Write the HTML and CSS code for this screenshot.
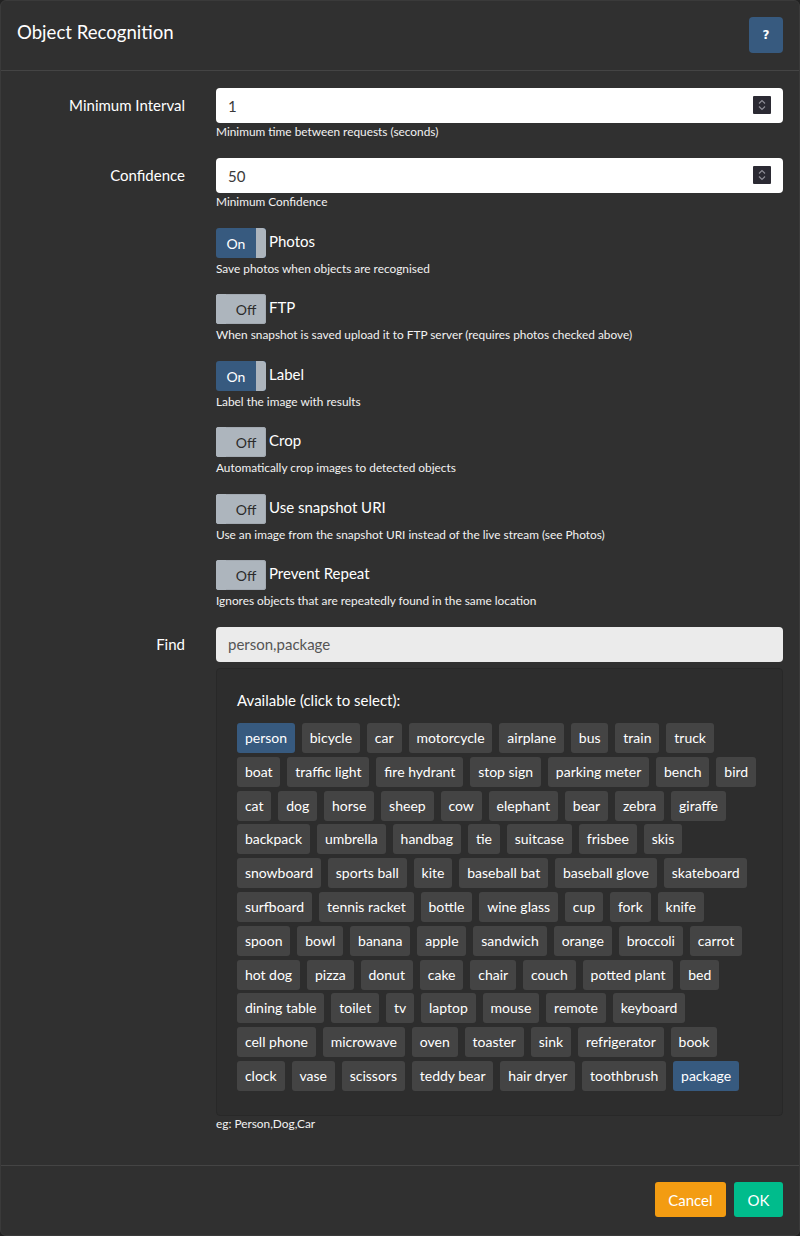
FILE: index.html
```html
<!DOCTYPE html>
<html lang="en">
<head>
<meta charset="utf-8">
<title>Object Recognition</title>
<link rel="stylesheet" href="styles.css">
</head>
<body>
<div class="modal">
  <div class="modal-header">
    <h4 class="modal-title">Object Recognition</h4>
    <button class="btn-help" type="button">?</button>
  </div>
  <div class="modal-body">
    <div class="group">
      <label class="control-label">Minimum Interval</label>
      <div class="control">
        <div class="form-control number"><span class="value">1</span><svg class="spin" width="18" height="18" viewBox="0 0 18 18"><rect width="18" height="18" rx="1" fill="#2b2a33"/><path d="M6 7.5 L9 4.5 L12 7.5" fill="none" stroke="#8e8d96" stroke-width="1.2"/><path d="M6 10.5 L9 13.5 L12 10.5" fill="none" stroke="#8e8d96" stroke-width="1.2"/></svg></div>
        <p class="help">Minimum time between requests (seconds)</p>
      </div>
    </div>
    <div class="group">
      <label class="control-label">Confidence</label>
      <div class="control">
        <div class="form-control number"><span class="value">50</span><svg class="spin" width="18" height="18" viewBox="0 0 18 18"><rect width="18" height="18" rx="1" fill="#2b2a33"/><path d="M6 7.5 L9 4.5 L12 7.5" fill="none" stroke="#8e8d96" stroke-width="1.2"/><path d="M6 10.5 L9 13.5 L12 10.5" fill="none" stroke="#8e8d96" stroke-width="1.2"/></svg></div>
        <p class="help">Minimum Confidence</p>
      </div>
    </div>

    <div class="group toggle-group">
      <span></span>
      <div class="control">
        <div class="toggle-line"><span class="toggle on"><span class="toggle-text">On</span><span class="handle"></span></span><span class="toggle-label">Photos</span></div>
        <p class="help help-toggle">Save photos when objects are recognised</p>
      </div>
    </div>
    <div class="group toggle-group">
      <span></span>
      <div class="control">
        <div class="toggle-line"><span class="toggle off"><span class="handle"></span><span class="toggle-text">Off</span></span><span class="toggle-label">FTP</span></div>
        <p class="help help-toggle">When snapshot is saved upload it to FTP server (requires photos checked above)</p>
      </div>
    </div>
    <div class="group toggle-group">
      <span></span>
      <div class="control">
        <div class="toggle-line"><span class="toggle on"><span class="toggle-text">On</span><span class="handle"></span></span><span class="toggle-label">Label</span></div>
        <p class="help help-toggle">Label the image with results</p>
      </div>
    </div>
    <div class="group toggle-group">
      <span></span>
      <div class="control">
        <div class="toggle-line"><span class="toggle off"><span class="handle"></span><span class="toggle-text">Off</span></span><span class="toggle-label">Crop</span></div>
        <p class="help help-toggle">Automatically crop images to detected objects</p>
      </div>
    </div>
    <div class="group toggle-group">
      <span></span>
      <div class="control">
        <div class="toggle-line"><span class="toggle off"><span class="handle"></span><span class="toggle-text">Off</span></span><span class="toggle-label">Use snapshot URI</span></div>
        <p class="help help-toggle">Use an image from the snapshot URI instead of the live stream (see Photos)</p>
      </div>
    </div>
    <div class="group toggle-group last-toggle">
      <span></span>
      <div class="control">
        <div class="toggle-line"><span class="toggle off"><span class="handle"></span><span class="toggle-text">Off</span></span><span class="toggle-label">Prevent Repeat</span></div>
        <p class="help help-toggle">Ignores objects that are repeatedly found in the same location</p>
      </div>
    </div>

    <div class="group find-group">
      <label class="control-label">Find</label>
      <div class="control">
        <div class="form-control readonly"><span class="value">person,package</span></div>
        <div class="well">
          <div class="well-title">Available (click to select):</div>
          <div class="tags">
            <div class="tag-row"><span class="tag sel">person</span><span class="tag">bicycle</span><span class="tag">car</span><span class="tag">motorcycle</span><span class="tag">airplane</span><span class="tag">bus</span><span class="tag">train</span><span class="tag">truck</span></div>
            <div class="tag-row"><span class="tag">boat</span><span class="tag">traffic light</span><span class="tag">fire hydrant</span><span class="tag">stop sign</span><span class="tag">parking meter</span><span class="tag">bench</span><span class="tag">bird</span></div>
            <div class="tag-row"><span class="tag">cat</span><span class="tag">dog</span><span class="tag">horse</span><span class="tag">sheep</span><span class="tag">cow</span><span class="tag">elephant</span><span class="tag">bear</span><span class="tag">zebra</span><span class="tag">giraffe</span></div>
            <div class="tag-row"><span class="tag">backpack</span><span class="tag">umbrella</span><span class="tag">handbag</span><span class="tag">tie</span><span class="tag">suitcase</span><span class="tag">frisbee</span><span class="tag">skis</span></div>
            <div class="tag-row"><span class="tag">snowboard</span><span class="tag">sports ball</span><span class="tag">kite</span><span class="tag">baseball bat</span><span class="tag">baseball glove</span><span class="tag">skateboard</span></div>
            <div class="tag-row"><span class="tag">surfboard</span><span class="tag">tennis racket</span><span class="tag">bottle</span><span class="tag">wine glass</span><span class="tag">cup</span><span class="tag">fork</span><span class="tag">knife</span></div>
            <div class="tag-row"><span class="tag">spoon</span><span class="tag">bowl</span><span class="tag">banana</span><span class="tag">apple</span><span class="tag">sandwich</span><span class="tag">orange</span><span class="tag">broccoli</span><span class="tag">carrot</span></div>
            <div class="tag-row"><span class="tag">hot dog</span><span class="tag">pizza</span><span class="tag">donut</span><span class="tag">cake</span><span class="tag">chair</span><span class="tag">couch</span><span class="tag">potted plant</span><span class="tag">bed</span></div>
            <div class="tag-row"><span class="tag">dining table</span><span class="tag">toilet</span><span class="tag">tv</span><span class="tag">laptop</span><span class="tag">mouse</span><span class="tag">remote</span><span class="tag">keyboard</span></div>
            <div class="tag-row"><span class="tag">cell phone</span><span class="tag">microwave</span><span class="tag">oven</span><span class="tag">toaster</span><span class="tag">sink</span><span class="tag">refrigerator</span><span class="tag">book</span></div>
            <div class="tag-row"><span class="tag">clock</span><span class="tag">vase</span><span class="tag">scissors</span><span class="tag">teddy bear</span><span class="tag">hair dryer</span><span class="tag">toothbrush</span><span class="tag sel">package</span></div>
          </div>
        </div>
        <p class="help help-eg">eg: Person,Dog,Car</p>
      </div>
    </div>
  </div>
  <div class="modal-footer">
    <button class="btn btn-warning" type="button">Cancel</button>
    <button class="btn btn-success" type="button">OK</button>
  </div>
</div>
</body>
</html>
```
FILE: styles.css
```css
* { box-sizing: border-box; }
html, body { margin: 0; padding: 0; }
body {
  background: #222;
  font-family: Lato, "Open Sans", "Liberation Sans", sans-serif;
  color: #fff;
  width: 800px;
  height: 1236px;
}
.modal {
  width: 800px;
  height: 1236px;
  background: #303030;
  border: 1px solid #3a3a3a;
  border-radius: 6px;
  display: flex;
  flex-direction: column;
  overflow: hidden;
}
.modal-header {
  height: 70px;
  border-bottom: 1px solid #444;
  display: flex;
  align-items: flex-start;
  justify-content: space-between;
  padding: 16px 16px 0 16px;
}
.modal-title {
  margin: 0;
  font-size: 18.6px;
  font-weight: 400;
  line-height: 30px;
  color: #fff;
}
.btn-help {
  width: 34px;
  height: 36px;
  border: none;
  border-radius: 4px;
  background: #375a7f;
  color: #fff;
  font-family: "DejaVu Sans", sans-serif;
  font-weight: 700;
  font-size: 12px;
  padding: 0;
}
.modal-body {
  flex: 1;
  padding: 17px 16px 0 15px;
}
.group {
  display: grid;
  grid-template-columns: 169px 1fr;
  column-gap: 31px;
  margin-bottom: 18px;
}
.control-label {
  text-align: right;
  font-size: 15px;
  line-height: 35px;
  color: #fff;
}
.control { min-width: 0; }
.form-control {
  height: 35px;
  border-radius: 4px;
  background: #fff;
  display: flex;
  align-items: center;
  justify-content: space-between;
  padding: 0 12px 0 12px;
  font-size: 15px;
  color: #3a3a3a;
}
.form-control .spin { display: block; margin-top: -1px; }
.form-control.readonly {
  background: #ebebeb;
  color: #555;
}
.help {
  margin: 1px 0 0 0;
  font-size: 11.85px;
  line-height: 16px;
  color: #f2f2f2;
}
.toggle-group { margin-bottom: 17.4px; }
.last-toggle { margin-bottom: 18px; }
.help-toggle { margin-top: 3px; }
.toggle-line {
  display: flex;
  align-items: flex-start;
  height: 30px;
}
.toggle {
  width: 50px;
  height: 30px;
  border-radius: 3px;
  display: flex;
  overflow: hidden;
  font-size: 14px;
  line-height: 30px;
}
.toggle .toggle-text {
  width: 40px;
  text-align: center;
  padding-top: 1px;
}
.toggle .handle {
  width: 10px;
  height: 30px;
}
.toggle.on { background: #375a7f; color: #fff; }
.toggle.on .handle { background: #adb5bd; border-radius: 0 3px 3px 0; }
.toggle.off {
  background: #adb5bd;
  color: #2b2b2b;
  box-shadow: inset 0 0 0 1px #a2a9b1;
}
.toggle.off .handle { background: #adb5bd; }
.toggle-label {
  margin-left: 3px;
  font-size: 15px;
  line-height: 26px;
}
.find-group { margin-bottom: 0; }
.well {
  margin-top: 6px;
  background: #2d2d2d;
  border: 1px solid #282828;
  border-radius: 4px;
  padding: 20px 20px 24px 20px;
}
.well-title {
  font-size: 15px;
  line-height: 22px;
  margin-bottom: 12px;
}
.tags {
  display: flex;
  flex-direction: column;
  row-gap: 3.8px;
}
.tag-row {
  display: flex;
  column-gap: 7px;
}
.tag {
  height: 30px;
  line-height: 30px;
  padding: 0 7.9px;
  background: #444;
  border-radius: 3px;
  font-size: 14px;
  color: #fff;
  white-space: nowrap;
}
.tag.sel { background: #375a7f; }
.help-eg { margin-top: 0; }
.modal-footer {
  height: 70px;
  border-top: 1px solid #444;
  display: flex;
  justify-content: flex-end;
  align-items: flex-start;
  padding: 16px 16px 0 16px;
  column-gap: 8px;
}
.btn {
  height: 35px;
  border: none;
  border-radius: 3px;
  padding: 0 13.5px;
  font-family: Lato, "Open Sans", "Liberation Sans", sans-serif;
  font-size: 15px;
  color: #fff;
}
.btn-warning { background: #f39c12; }
.btn-success { background: #00bc8c; }
```
